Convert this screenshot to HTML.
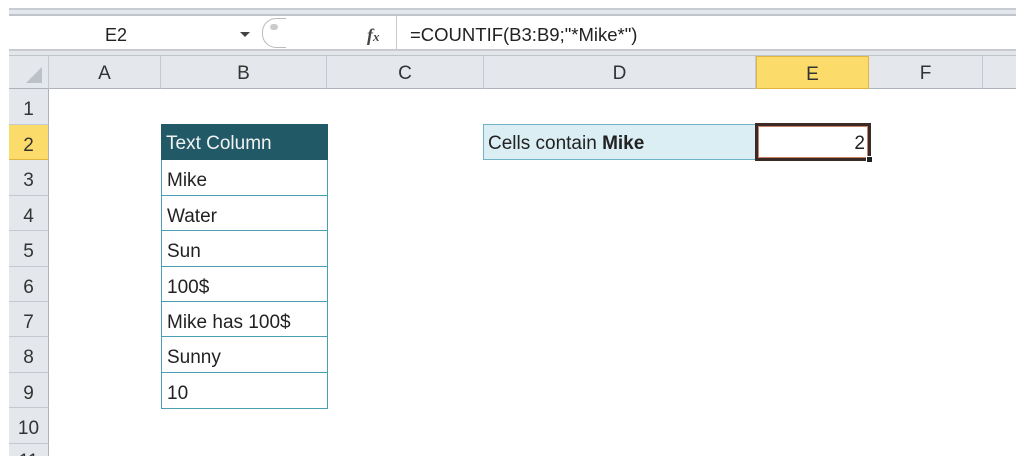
<!DOCTYPE html><html><head><style>
body{margin:0;width:1024px;height:466px;background:#fff;position:relative;overflow:hidden;font-family:"Liberation Sans",sans-serif;color:#222}
div{position:absolute;box-sizing:border-box}
.t{font-size:19px;line-height:35px;white-space:nowrap;padding-top:3px}
.ch{top:56px;height:33px;border-right:1px solid #c5c9cf;border-bottom:1px solid #aeb3ba;background:#e4e7ec;text-align:center;font-size:19px;line-height:35px;color:#333}
.rh{left:9px;width:40px;border-right:1px solid #aeb3ba;border-bottom:1px solid #c5c9cf;background:#e4e7ec;text-align:center;font-size:19px;color:#333}
.bc{left:161px;width:167px;border:1.5px solid #4b9fb2;border-top:none;padding-left:5px}
</style></head><body>
<div style="left:9px;top:8px;width:1007px;height:8px;background:#e3e6ea;border-top:2px solid #c8ccd2;border-bottom:2px solid #bfc4ca"></div>
<div style="left:9px;top:16px;width:1007px;height:33px;background:#fff"></div>
<div class="t" style="left:105px;top:15px;line-height:34px;font-size:18px">E2</div>
<div style="left:240px;top:32px;width:0;height:0;border-left:5px solid transparent;border-right:5px solid transparent;border-top:5px solid #444"></div>
<div style="left:262px;top:18px;width:24px;height:30px;border:1.5px solid #bbb;border-right:none;border-radius:14px 0 0 14px"></div>
<div style="left:270px;top:24px;width:8px;height:6px;border-radius:4px;background:#ccc"></div>
<div class="t" style="left:367px;top:15px;line-height:34px;font-family:'Liberation Serif',serif;font-style:italic;font-weight:bold;font-size:18px;color:#444">f<span style="font-size:13px">x</span></div>
<div style="left:396px;top:16px;width:1px;height:33px;background:#c8ccd2"></div>
<div class="t" style="left:410px;top:15px;line-height:34px;font-size:18.5px">=COUNTIF(B3:B9;"*Mike*")</div>
<div style="left:9px;top:49px;width:1007px;height:7px;background:#e3e6ea;border-top:2px solid #c8ccd2;border-bottom:1px solid #bfc4ca"></div>
<div class="ch" style="left:9px;width:40px"><span style="position:absolute;right:6px;bottom:5px;width:0;height:0;border-left:16px solid transparent;border-bottom:16px solid #bcc1c8"></span></div>
<div class="ch" style="left:49px;width:112px">A</div>
<div class="ch" style="left:161px;width:166px">B</div>
<div class="ch" style="left:327px;width:157px">C</div>
<div class="ch" style="left:484px;width:272px">D</div>
<div class="ch" style="left:756px;width:113px;background:#fbdc6a;border:1px solid #e2b440">E</div>
<div class="ch" style="left:869px;width:114px">F</div>
<div class="ch" style="left:983px;width:33px;border-right:none"></div>
<div class="rh t" style="top:89px;height:36px">1</div>
<div class="rh t" style="top:125px;height:35px;background:#fbdc6a;border-bottom:1px solid #e2b440">2</div>
<div class="rh t" style="top:160px;height:36px">3</div>
<div class="rh t" style="top:196px;height:35px">4</div>
<div class="rh t" style="top:231px;height:36px">5</div>
<div class="rh t" style="top:267px;height:35px">6</div>
<div class="rh t" style="top:302px;height:35px">7</div>
<div class="rh t" style="top:337px;height:36px">8</div>
<div class="rh t" style="top:373px;height:35px">9</div>
<div class="rh t" style="top:408px;height:36px">10</div>
<div class="rh t" style="top:444px;height:12px;border-bottom:none;overflow:hidden;line-height:30px">11</div>
<div class="t" style="left:161px;top:124px;width:167px;height:36px;background:#215967;color:#f2f2f2;padding-left:5px;line-height:34px">Text Column</div>
<div class="bc t" style="top:160px;height:36px">Mike</div>
<div class="bc t" style="top:196px;height:35px">Water</div>
<div class="bc t" style="top:231px;height:36px">Sun</div>
<div class="bc t" style="top:267px;height:35px">100$</div>
<div class="bc t" style="top:302px;height:35px">Mike has 100$</div>
<div class="bc t" style="top:337px;height:36px">Sunny</div>
<div class="bc t" style="top:373px;height:36px">10</div>
<div class="t" style="left:483px;top:124px;width:275px;height:36px;background:#dbeef3;border:1.5px solid #6fb3c6;padding-left:4px;line-height:32px">Cells contain <b>Mike</b></div>
<div class="t" style="left:755px;top:123px;width:116px;height:38px;border:3px solid #3a2a26;box-shadow:inset 0 0 0 1px #c9846a;text-align:right;padding-right:3px;line-height:30px">2</div>
<div style="left:866px;top:156px;width:7px;height:7px;background:#222;border:1px solid #fff"></div>
</body></html>
